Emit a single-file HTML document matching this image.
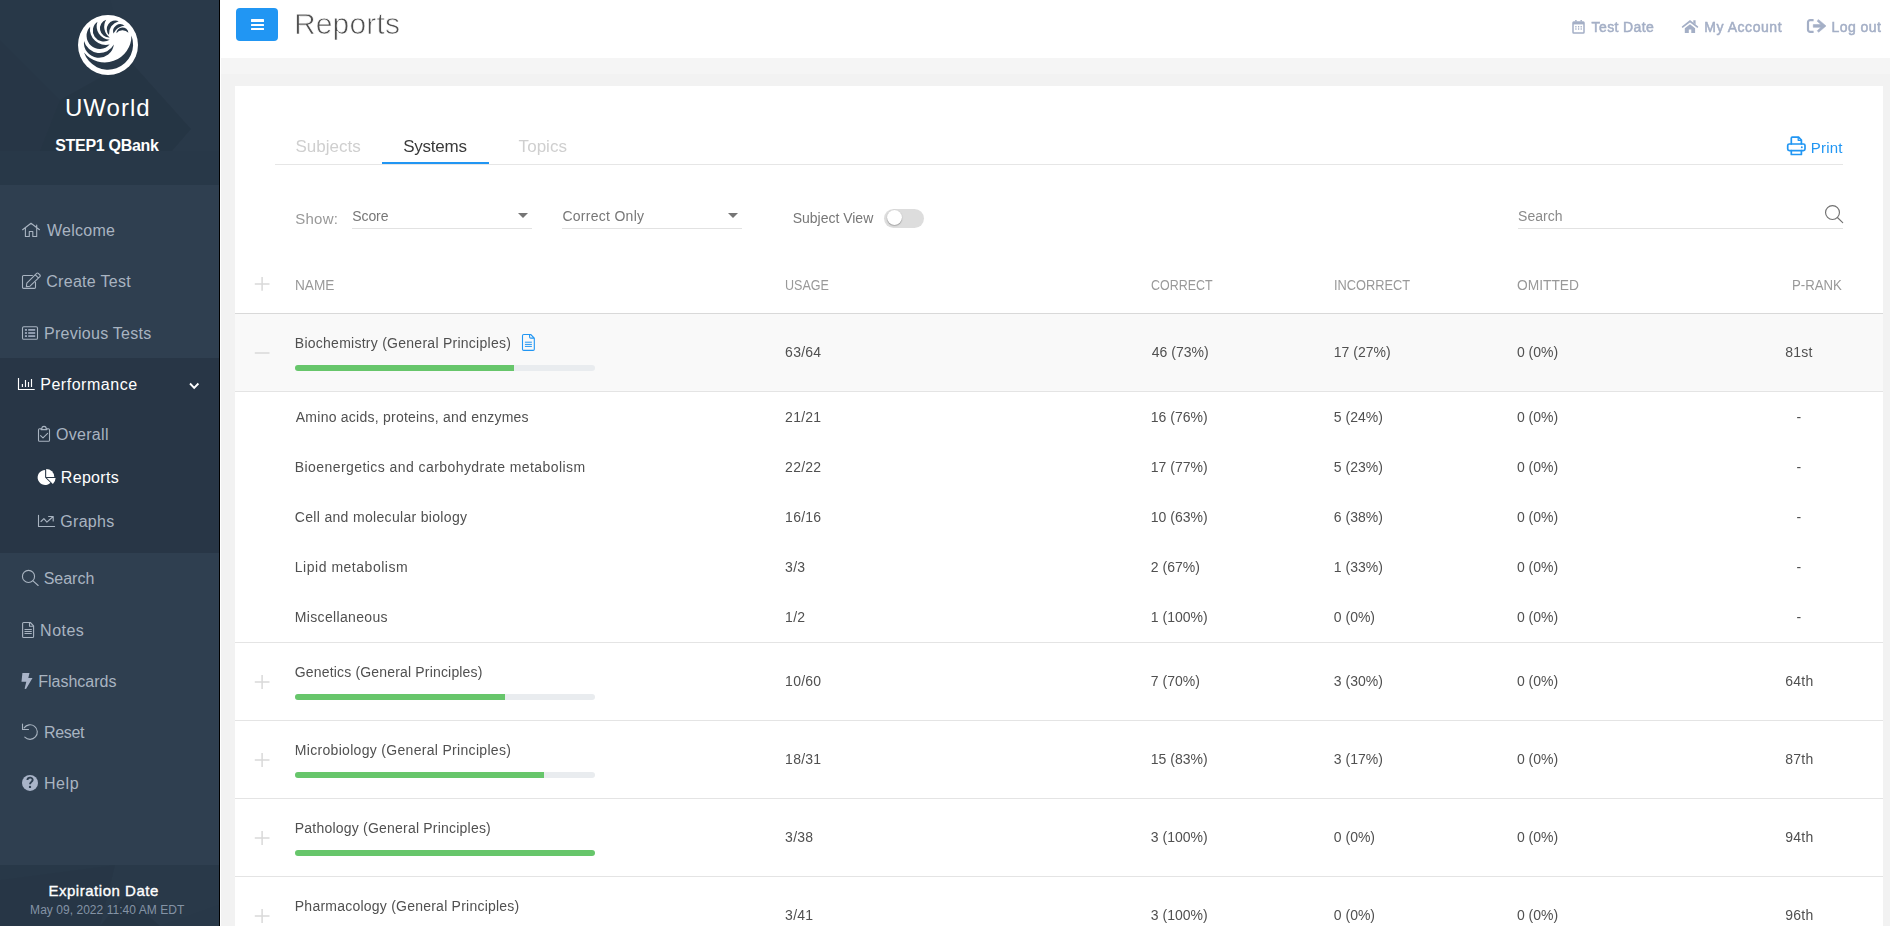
<!DOCTYPE html>
<html lang="en"><head><meta charset="utf-8"><title>Reports</title>
<style>
html,body{margin:0;padding:0;}
body{width:1890px;height:926px;overflow:hidden;position:relative;background:#f2f2f2;font-family:"Liberation Sans",sans-serif;}
.a{position:absolute;}
.t{position:absolute;white-space:pre;line-height:1;}
svg{position:absolute;overflow:visible;}
.ln{position:absolute;height:1px;background:#e4e4e4;}
.bar{position:absolute;left:295px;width:300px;height:6px;border-radius:3px;background:#e9ecef;overflow:hidden;}
.bar i{display:block;height:6px;background:#67c66b;}
.g{position:absolute;left:0;top:0;width:1890px;height:926px;will-change:transform;}

</style></head>
<body>
<!-- sidebar -->
<div class="a" style="left:0;top:0;width:219px;height:926px;background:#2f3f50;"></div>
<div class="a" style="left:0;top:0;width:219px;height:185px;background:#283848;"></div>
<div class="a" style="left:0;top:358px;width:219px;height:195px;background:#283646;"></div>
<div class="a" style="left:0;top:865px;width:219px;height:61px;background:#283848;"></div>
<svg style="left:0;top:0" width="219" height="926" viewBox="0 0 219 926">
<path d="M110 0H219V115L191 129L130 61Z" fill="#fff" fill-opacity="0.008"/>
<path d="M0 40L60 0H110L130 61L60 100Z" fill="#fff" fill-opacity="0.004"/>
<path d="M60 100L130 61L191 129L172 151H40Z" fill="#000" fill-opacity="0.05"/>
<path d="M0 40L60 100L40 151H0Z" fill="#000" fill-opacity="0.025"/>
<path d="M191 129L219 115V151H172Z" fill="#fff" fill-opacity="0.008"/>
<path d="M115 865H219V905L160 926H100Z" fill="#fff" fill-opacity="0.008"/>
<path d="M0 880L115 865L100 926H0Z" fill="#000" fill-opacity="0.025"/>
<path d="M100 926L125 895L160 926Z" fill="#000" fill-opacity="0.06"/>
</svg>
<div class="a" style="left:219px;top:0;width:1px;height:926px;background:#000;"></div>
<div class="a" style="left:220px;top:0;width:1px;height:926px;background:#fff;"></div>
<!-- topbar -->
<div class="a" style="left:220px;top:0;width:1670px;height:58px;background:#fff;"></div>
<div class="a" style="left:221px;top:58px;width:1669px;height:16px;background:#f5f5f5;"></div>
<div class="a" style="left:236px;top:8px;width:42px;height:33px;border-radius:4px;background:#2196f3;"></div>
<div class="a" style="left:250.8px;top:19.2px;width:13.3px;height:2.7px;background:#fff;border-radius:0.5px;"></div>
<div class="a" style="left:250.8px;top:23.5px;width:13.3px;height:2.7px;background:#fff;border-radius:0.5px;"></div>
<div class="a" style="left:250.8px;top:27.8px;width:13.3px;height:2.7px;background:#fff;border-radius:0.5px;"></div>
<!-- card -->
<div class="a" style="left:235px;top:86px;width:1648px;height:840px;background:#fff;"></div>
<!-- tabs -->
<div class="ln" style="left:275px;top:164px;width:1568px;background:#e6e6e6;"></div>
<div class="a" style="left:382px;top:162px;width:107px;height:2px;background:#2196f3;"></div>
<!-- filter underlines -->
<div class="ln" style="left:352px;top:228px;width:180px;background:#e2e2e2;"></div>
<div class="ln" style="left:562px;top:228px;width:180px;background:#e2e2e2;"></div>
<div class="ln" style="left:1518px;top:228px;width:325px;background:#e2e2e2;"></div>
<svg style="left:518px;top:213px" width="10" height="5" viewBox="0 0 10 5"><path d="M0 0H10L5 5Z" fill="#757575"/></svg>
<svg style="left:728px;top:213px" width="10" height="5" viewBox="0 0 10 5"><path d="M0 0H10L5 5Z" fill="#757575"/></svg>
<!-- toggle -->
<div class="a" style="left:884px;top:209px;width:40px;height:19px;border-radius:9.5px;background:#dddddd;"></div>
<div class="a" style="left:886.6px;top:209.8px;width:15.6px;height:15.6px;border-radius:8px;background:#fff;box-shadow:0 0.6px 1.2px rgba(0,0,0,.4);"></div>
<!-- table rows -->
<div class="a" style="left:235px;top:314px;width:1648px;height:77px;background:#f9f9f9;"></div>
<div class="ln" style="left:235px;top:313px;width:1648px;background:#d9d9d9;"></div>
<div class="ln" style="left:235px;top:391px;width:1648px;"></div>
<div class="ln" style="left:235px;top:642px;width:1648px;"></div>
<div class="ln" style="left:235px;top:720px;width:1648px;"></div>
<div class="ln" style="left:235px;top:798px;width:1648px;"></div>
<div class="ln" style="left:235px;top:876px;width:1648px;"></div>
<!-- progress bars -->
<div class="bar" style="top:365px"><i style="width:219px"></i></div>
<div class="bar" style="top:694px"><i style="width:210px"></i></div>
<div class="bar" style="top:772px"><i style="width:249px"></i></div>
<div class="bar" style="top:850px"><i style="width:300px"></i></div>
<!-- plus / minus -->
<!-- ICONS -->
<svg style="left:0;top:0" width="1890" height="926" viewBox="0 0 1890 926" fill="none" stroke-linecap="round" stroke-linejoin="round">
<!-- logo -->
<g id="logo">
<circle cx="108" cy="45" r="30" fill="#fff"/>
<path d="M84.01 52.48A25.20 25.20 0 1 0 131.44 35.47A26.67 26.67 0 0 1 84.01 52.48Z" fill="#283848"/>
<path d="M84.01 41.01A15.02 15.02 0 1 0 113.85 44.51A16.17 16.17 0 0 1 84.01 41.01Z" fill="#283848"/>
<path d="M90.14 26.72A13.21 13.21 0 1 0 109.67 44.51A15.87 15.87 0 0 1 90.14 26.72Z" fill="#283848"/>
<path d="M97.42 21.67A10.96 10.96 0 0 0 109.67 39.84A13.62 13.62 0 0 1 97.42 21.67Z" fill="#283848"/>
<path d="M106.17 19.73A9.08 9.08 0 0 0 109.67 37.41A13.27 13.27 0 0 1 106.17 19.73Z" fill="#283848"/>
<path d="M118.71 21.19A8.65 8.65 0 0 0 108.99 34.99A13.04 13.04 0 0 1 118.71 21.19Z" fill="#283848"/>
<path d="M124.54 25.56A7.13 7.13 0 0 0 113.46 33.43A15.32 15.32 0 0 1 124.54 25.56Z" fill="#283848"/>
<path d="M128.43 32.75A6.05 6.05 0 0 0 116.38 33.24A7.78 7.78 0 0 1 128.43 32.75Z" fill="#283848"/>

</g>
<!-- nav icons -->
<g stroke="#a9b4c1" stroke-width="1.1">
<!-- home -->
<path d="M22.6 229.7L31 223.2L39.5 229.7M25.4 228V236.5H29.3V231.5H32.8V236.5H36.7V228M36.7 225V227.4"/>
<!-- edit -->
<path d="M32.4 275.5H23.6a1.1 1.1 0 0 0-1.1 1.1V287.3a1.1 1.1 0 0 0 1.1 1.1H34.4a1.1 1.1 0 0 0 1.1-1.1V282.4"/>
<path d="M26.4 286.6L26.8 283.2L36.6 273.4a1.2 1.2 0 0 1 1.7 0L39.9 275a1.2 1.2 0 0 1 0 1.7L30 286.2ZM35.3 274.8L38.4 277.9"/>
<!-- list-alt -->
<rect x="22.5" y="326.7" width="15" height="12.6" rx="1.4"/>
<!-- clipboard-check -->
<path d="M41.8 428.8H39.6a1.1 1.1 0 0 0-1.1 1.1V440.2a1.1 1.1 0 0 0 1.1 1.1H48.4a1.1 1.1 0 0 0 1.1-1.1V429.9a1.1 1.1 0 0 0-1.1-1.1H46.2M41.8 428.8a2.2 2.4 0 0 1 4.4 0M41 429.6H47"/>
<path d="M40.6 435.6L43 437.9L47.6 433.3"/>
<!-- chart-line -->
<path d="M38.5 515.2V526.5H54.6M41 521.5L43.9 518.6L46.9 522.2L52.6 517M48.6 516.5H53.2V521"/>
<!-- search -->
<circle cx="28.5" cy="576.4" r="6.05"/><path d="M33 580.9L38.2 585.5"/>
<!-- file-alt -->
<path d="M30.3 622.5H23.7a1.1 1.1 0 0 0-1.1 1.1V636.4a1.1 1.1 0 0 0 1.1 1.1H32.5a1.1 1.1 0 0 0 1.1-1.1V625.8ZM29.5 622.8V626.3H33.4"/>
<path d="M24.9 629.5H31.4M24.9 631.5H31.4M24.9 633.5H31.4" stroke-width="1"/>
<!-- undo -->
<path d="M22.5 724.1V729.5H28.5M24.1 727.9A7.26 7.26 0 1 1 24.8 737.1"/>
</g>
<!-- list-alt inner rows -->
<g fill="#99a5b8" stroke="none">
<rect x="24.9" y="329" width="2.1" height="1.8"/><rect x="28.2" y="329" width="7" height="1.8"/>
<rect x="24.9" y="332.1" width="2.1" height="1.8"/><rect x="28.2" y="332.1" width="7" height="1.8"/>
<rect x="24.9" y="335.2" width="2.1" height="1.8"/><rect x="28.2" y="335.2" width="7" height="1.8"/>
</g>
<!-- performance chart-bar + chevron -->
<g stroke="#fff" stroke-width="1.15" stroke-linecap="butt">
<path d="M18.5 378V389.5H34.7"/>
<path d="M22.4 384.1V386.9M25.5 380V386.9M28.5 381.9V386.9M31.5 379.1V386.9"/>
</g>
<path d="M190 383.5L194.2 387.8L198.4 383.5" stroke="#fff" stroke-width="1.9" stroke-linecap="butt" stroke-linejoin="miter"/>
<!-- pie -->
<g fill="#fff" stroke="none">
<path d="M45.1 470A7.5 7.5 0 1 0 50.4 482.8L45.1 477.5Z"/>
<path d="M46.2 477V468.9A8.1 8.1 0 0 1 54.3 477Z"/>
<path d="M46.9 478H55.6A8.7 8.7 0 0 1 52.9 484Z"/>
</g>
<!-- bolt -->
<path d="M22.4 673H29.5L28.3 677.9H32.5L26 689.1L24.6 688.8L26.3 681.8H21.5Z" fill="#a9b4c8" stroke="none"/>
<!-- question-circle -->
<circle cx="30" cy="782.9" r="8" fill="#a9b4c8" stroke="none"/>
<path d="M27.4 780C27.6 778 29.3 777.5 30.5 777.6C32 777.8 32.9 779 32.6 780.3C32.3 781.8 30 782.3 30 784.3" stroke="#2f3f50" stroke-width="1.9" stroke-linecap="butt"/>
<circle cx="30" cy="786.9" r="1.2" fill="#2f3f50" stroke="none"/>
<!-- topbar icons -->
<g stroke="#a4afc6" fill="none">
<!-- calendar -->
<rect x="1573" y="21.9" width="11" height="11.2" rx="0.8" stroke-width="1.5"/>
<path d="M1573 23.2H1584" stroke-width="2.4" stroke-linecap="butt"/>
<path d="M1575.9 19.9V21.5M1581.2 19.9V21.5" stroke-width="1.5" stroke-linecap="butt"/>
<path d="M1575.9 26.1V29.7M1578.6 26.1V29.7M1581.2 26.1V29.7" stroke-width="1.25" stroke-linecap="butt" stroke-dasharray="1.5 0.6"/>
<!-- home solid roof -->
<path d="M1682.7 26.9L1690 21.2L1697.3 26.9" stroke-width="1.8" stroke-linejoin="miter"/>
<!-- sign out bracket -->
<path d="M1813.6 20.1H1810.2a2.2 2.2 0 0 0-2.2 2.2V29.7a2.2 2.2 0 0 0 2.2 2.2H1813.6" stroke-width="2.2" stroke-linecap="butt"/>
</g>
<g fill="#a4afc6" stroke="none">
<path d="M1693.3 20.3H1695.6V24.5L1693.3 22.7Z"/>
<path d="M1690 24.3L1695.1 28.3V32.9H1691.3V29.4H1688.8V32.9H1684.8V28.3Z"/>
<path d="M1818.6 19.7L1826 25.9L1818.6 32.3L1817.3 30.7L1821 27.3H1813.3V24.6H1821L1817.3 21.3Z" stroke="#a4afc6" stroke-width="0.6" stroke-linejoin="round"/>
</g>
<!-- print icon -->
<g stroke="#2196f3" stroke-width="1.7" fill="none">
<path d="M1791.3 144V138.2a1 1 0 0 1 1-1H1798.6L1801.4 140V144"/>
<path d="M1798.2 137.4V140.3H1801.2" stroke-width="1.3"/>
<rect x="1787.7" y="144" width="17.3" height="6.6" rx="1.6"/>
<path d="M1791.3 150.6V154.5H1801.4V150.6"/>
</g>
<circle cx="1801.8" cy="147.2" r="0.95" fill="#2196f3"/>
<!-- search icon right -->
<g stroke="#707070" stroke-width="1.15" fill="none">
<circle cx="1832.5" cy="212.5" r="6.95"/><path d="M1837.4 217.5L1842.7 222.6"/>
</g>
<g stroke="#d9d9d9" stroke-width="1.5" stroke-linecap="butt" fill="none"><path d="M262.1 277.0V290.8M254.8 283.9H269.5"/><path d="M254.8 353H269.5"/><path d="M262.1 675.1V688.9M254.8 682H269.5"/><path d="M262.1 753.1V766.9M254.8 760H269.5"/><path d="M262.1 831.1V844.9M254.8 838H269.5"/><path d="M262.1 909.1V922.9M254.8 916H269.5"/></g>
<!-- doc icon blue -->
<g stroke="#2196f3" stroke-width="1.1" fill="none">
<path d="M530.7 334.5H523.7a1.2 1.2 0 0 0-1.2 1.2V349.2a1.2 1.2 0 0 0 1.2 1.2H533.1a1.2 1.2 0 0 0 1.2-1.2V338.1ZM529.6 334.8V337a1.1 1.1 0 0 0 1.1 1.1H534"/>
<path d="M525.3 342.2H531.5M525.3 344.4H531.5M525.3 346.4H531.5" stroke-width="1"/>
</g>
</svg>

<!-- sidebar text -->
<span class="t" style="left:65.0px;top:96px;font-size:24px;color:#fff;letter-spacing:1.0px;">UWorld</span>
<span class="t" style="left:55.2px;top:138px;font-size:16px;color:#fff;font-weight:700;letter-spacing:-0.29px;">STEP1 QBank</span>
<span class="t" style="left:46.9px;top:223px;font-size:16px;color:#a9b4c1;letter-spacing:0.28px;">Welcome</span>
<span class="t" style="left:46.2px;top:274px;font-size:16px;color:#a9b4c1;letter-spacing:0.31px;">Create Test</span>
<span class="t" style="left:44.1px;top:326px;font-size:16px;color:#a9b4c1;letter-spacing:0.26px;">Previous Tests</span>
<span class="t" style="left:40.2px;top:377px;font-size:16px;color:#fff;letter-spacing:0.53px;">Performance</span>
<span class="t" style="left:56.0px;top:427px;font-size:16px;color:#a9b4c1;letter-spacing:0.3px;">Overall</span>
<span class="t" style="left:60.8px;top:470px;font-size:16px;color:#fff;letter-spacing:0.32px;">Reports</span>
<span class="t" style="left:60.3px;top:514px;font-size:16px;color:#a9b4c1;letter-spacing:0.3px;">Graphs</span>
<span class="t" style="left:43.7px;top:571px;font-size:16px;color:#a9b4c1;letter-spacing:-0.02px;">Search</span>
<span class="t" style="left:40.1px;top:623px;font-size:16px;color:#a9b4c1;letter-spacing:0.48px;">Notes</span>
<span class="t" style="left:38.2px;top:674px;font-size:16px;color:#a9b4c1;">Flashcards</span>
<span class="t" style="left:44.0px;top:725px;font-size:16px;color:#a9b4c1;letter-spacing:-0.35px;">Reset</span>
<span class="t" style="left:44.0px;top:776px;font-size:16px;color:#a9b4c1;letter-spacing:0.57px;">Help</span>
<span class="t" style="left:48.4px;top:883px;font-size:15px;color:#fff;letter-spacing:0.53px;-webkit-text-stroke:0.35px #fff;">Expiration Date</span>
<span class="t" style="left:30.1px;top:904px;font-size:12px;color:#8493a5;letter-spacing:0.04px;">May 09, 2022 11:40 AM EDT</span>
<!-- main text -->
<div class="g">
<span class="t" style="left:293.9px;top:9px;font-size:30px;color:#505050;letter-spacing:0.17px;-webkit-text-stroke:0.75px #fff;">Reports</span>
<span class="t" style="left:1591.6px;top:20px;font-size:14px;color:#a4afc6;letter-spacing:0.38px;-webkit-text-stroke:0.5px #a4afc6;">Test Date</span>
<span class="t" style="left:1704.2px;top:20px;font-size:14px;color:#a4afc6;letter-spacing:0.56px;-webkit-text-stroke:0.5px #a4afc6;">My Account</span>
<span class="t" style="left:1831.6px;top:20px;font-size:14px;color:#a4afc6;letter-spacing:0.43px;-webkit-text-stroke:0.5px #a4afc6;">Log out</span>
<span class="t" style="left:295.4px;top:138px;font-size:17px;color:#cfcfcf;letter-spacing:0.04px;">Subjects</span>
<span class="t" style="left:403.2px;top:138px;font-size:17px;color:#3a3a3a;letter-spacing:-0.22px;">Systems</span>
<span class="t" style="left:518.6px;top:138px;font-size:17px;color:#cfcfcf;letter-spacing:0.04px;">Topics</span>
<span class="t" style="left:1810.8px;top:140px;font-size:15px;color:#2196f3;letter-spacing:0.22px;">Print</span>
<span class="t" style="left:295.2px;top:211px;font-size:15px;color:#999;letter-spacing:0.25px;">Show:</span>
<span class="t" style="left:352.3px;top:209px;font-size:14px;color:#777;letter-spacing:-0.1px;">Score</span>
<span class="t" style="left:562.4px;top:209px;font-size:14px;color:#777;letter-spacing:0.28px;">Correct Only</span>
<span class="t" style="left:792.7px;top:211px;font-size:14px;color:#777;letter-spacing:-0.01px;">Subject View</span>
<span class="t" style="left:1518.1px;top:209px;font-size:14px;color:#8a8a8a;letter-spacing:0.02px;">Search</span>
<span class="t" style="left:294.8px;top:278px;font-size:14px;color:#999;transform:scaleX(0.974);transform-origin:0 0;">NAME</span>
<span class="t" style="left:785.2px;top:278px;font-size:14px;color:#999;transform:scaleX(0.896);transform-origin:0 0;">USAGE</span>
<span class="t" style="left:1150.7px;top:278px;font-size:14px;color:#999;transform:scaleX(0.890);transform-origin:0 0;">CORRECT</span>
<span class="t" style="left:1333.7px;top:278px;font-size:14px;color:#999;transform:scaleX(0.915);transform-origin:0 0;">INCORRECT</span>
<span class="t" style="left:1516.6px;top:278px;font-size:14px;color:#999;transform:scaleX(0.984);transform-origin:0 0;">OMITTED</span>
<span class="t" style="left:1791.7px;top:278px;font-size:14px;color:#999;transform:scaleX(0.941);transform-origin:0 0;">P-RANK</span>
<span class="t" style="left:294.8px;top:336px;font-size:14px;color:#505050;letter-spacing:0.26px;">Biochemistry (General Principles)</span>
<span class="t" style="left:785.1px;top:345px;font-size:14px;color:#505050;letter-spacing:0.25px;">63/64</span>
<span class="t" style="left:1151.8px;top:345px;font-size:14px;color:#505050;">46 (73%)</span>
<span class="t" style="left:1333.8px;top:345px;font-size:14px;color:#505050;">17 (27%)</span>
<span class="t" style="left:1516.9px;top:345px;font-size:14px;color:#505050;">0 (0%)</span>
<span class="t" style="left:1785.2px;top:345px;font-size:14px;color:#505050;letter-spacing:0.25px;">81st</span>
<span class="t" style="left:295.8px;top:410px;font-size:14px;color:#505050;letter-spacing:0.24px;">Amino acids, proteins, and enzymes</span>
<span class="t" style="left:785.1px;top:410px;font-size:14px;color:#505050;letter-spacing:0.25px;">21/21</span>
<span class="t" style="left:1150.8px;top:410px;font-size:14px;color:#505050;">16 (76%)</span>
<span class="t" style="left:1333.8px;top:410px;font-size:14px;color:#505050;">5 (24%)</span>
<span class="t" style="left:1516.9px;top:410px;font-size:14px;color:#505050;">0 (0%)</span>
<span class="t" style="left:1796.6px;top:410px;font-size:14px;color:#505050;letter-spacing:0.25px;">-</span>
<span class="t" style="left:294.8px;top:460px;font-size:14px;color:#505050;letter-spacing:0.43px;">Bioenergetics and carbohydrate metabolism</span>
<span class="t" style="left:785.1px;top:460px;font-size:14px;color:#505050;letter-spacing:0.25px;">22/22</span>
<span class="t" style="left:1150.8px;top:460px;font-size:14px;color:#505050;">17 (77%)</span>
<span class="t" style="left:1333.8px;top:460px;font-size:14px;color:#505050;">5 (23%)</span>
<span class="t" style="left:1516.9px;top:460px;font-size:14px;color:#505050;">0 (0%)</span>
<span class="t" style="left:1796.6px;top:460px;font-size:14px;color:#505050;letter-spacing:0.25px;">-</span>
<span class="t" style="left:294.8px;top:510px;font-size:14px;color:#505050;letter-spacing:0.32px;">Cell and molecular biology</span>
<span class="t" style="left:785.1px;top:510px;font-size:14px;color:#505050;letter-spacing:0.25px;">16/16</span>
<span class="t" style="left:1150.8px;top:510px;font-size:14px;color:#505050;">10 (63%)</span>
<span class="t" style="left:1333.8px;top:510px;font-size:14px;color:#505050;">6 (38%)</span>
<span class="t" style="left:1516.9px;top:510px;font-size:14px;color:#505050;">0 (0%)</span>
<span class="t" style="left:1796.6px;top:510px;font-size:14px;color:#505050;letter-spacing:0.25px;">-</span>
<span class="t" style="left:294.8px;top:560px;font-size:14px;color:#505050;letter-spacing:0.52px;">Lipid metabolism</span>
<span class="t" style="left:785.1px;top:560px;font-size:14px;color:#505050;letter-spacing:0.25px;">3/3</span>
<span class="t" style="left:1150.8px;top:560px;font-size:14px;color:#505050;">2 (67%)</span>
<span class="t" style="left:1333.8px;top:560px;font-size:14px;color:#505050;">1 (33%)</span>
<span class="t" style="left:1516.9px;top:560px;font-size:14px;color:#505050;">0 (0%)</span>
<span class="t" style="left:1796.6px;top:560px;font-size:14px;color:#505050;letter-spacing:0.25px;">-</span>
<span class="t" style="left:294.8px;top:610px;font-size:14px;color:#505050;letter-spacing:0.34px;">Miscellaneous</span>
<span class="t" style="left:785.1px;top:610px;font-size:14px;color:#505050;letter-spacing:0.25px;">1/2</span>
<span class="t" style="left:1150.8px;top:610px;font-size:14px;color:#505050;">1 (100%)</span>
<span class="t" style="left:1333.8px;top:610px;font-size:14px;color:#505050;">0 (0%)</span>
<span class="t" style="left:1516.9px;top:610px;font-size:14px;color:#505050;">0 (0%)</span>
<span class="t" style="left:1796.6px;top:610px;font-size:14px;color:#505050;letter-spacing:0.25px;">-</span>
<span class="t" style="left:294.8px;top:665px;font-size:14px;color:#505050;letter-spacing:0.17px;">Genetics (General Principles)</span>
<span class="t" style="left:785.1px;top:674px;font-size:14px;color:#505050;letter-spacing:0.25px;">10/60</span>
<span class="t" style="left:1150.8px;top:674px;font-size:14px;color:#505050;">7 (70%)</span>
<span class="t" style="left:1333.8px;top:674px;font-size:14px;color:#505050;">3 (30%)</span>
<span class="t" style="left:1516.9px;top:674px;font-size:14px;color:#505050;">0 (0%)</span>
<span class="t" style="left:1785.2px;top:674px;font-size:14px;color:#505050;letter-spacing:0.25px;">64th</span>
<span class="t" style="left:294.8px;top:743px;font-size:14px;color:#505050;letter-spacing:0.31px;">Microbiology (General Principles)</span>
<span class="t" style="left:785.1px;top:752px;font-size:14px;color:#505050;letter-spacing:0.25px;">18/31</span>
<span class="t" style="left:1150.8px;top:752px;font-size:14px;color:#505050;">15 (83%)</span>
<span class="t" style="left:1333.8px;top:752px;font-size:14px;color:#505050;">3 (17%)</span>
<span class="t" style="left:1516.9px;top:752px;font-size:14px;color:#505050;">0 (0%)</span>
<span class="t" style="left:1785.2px;top:752px;font-size:14px;color:#505050;letter-spacing:0.25px;">87th</span>
<span class="t" style="left:294.8px;top:821px;font-size:14px;color:#505050;letter-spacing:0.21px;">Pathology (General Principles)</span>
<span class="t" style="left:785.1px;top:830px;font-size:14px;color:#505050;letter-spacing:0.25px;">3/38</span>
<span class="t" style="left:1150.8px;top:830px;font-size:14px;color:#505050;">3 (100%)</span>
<span class="t" style="left:1333.8px;top:830px;font-size:14px;color:#505050;">0 (0%)</span>
<span class="t" style="left:1516.9px;top:830px;font-size:14px;color:#505050;">0 (0%)</span>
<span class="t" style="left:1785.2px;top:830px;font-size:14px;color:#505050;letter-spacing:0.25px;">94th</span>
<span class="t" style="left:294.8px;top:899px;font-size:14px;color:#505050;letter-spacing:0.23px;">Pharmacology (General Principles)</span>
<span class="t" style="left:785.1px;top:908px;font-size:14px;color:#505050;letter-spacing:0.25px;">3/41</span>
<span class="t" style="left:1150.8px;top:908px;font-size:14px;color:#505050;">3 (100%)</span>
<span class="t" style="left:1333.8px;top:908px;font-size:14px;color:#505050;">0 (0%)</span>
<span class="t" style="left:1516.9px;top:908px;font-size:14px;color:#505050;">0 (0%)</span>
<span class="t" style="left:1785.2px;top:908px;font-size:14px;color:#505050;letter-spacing:0.25px;">96th</span>
</div>
</body></html>
